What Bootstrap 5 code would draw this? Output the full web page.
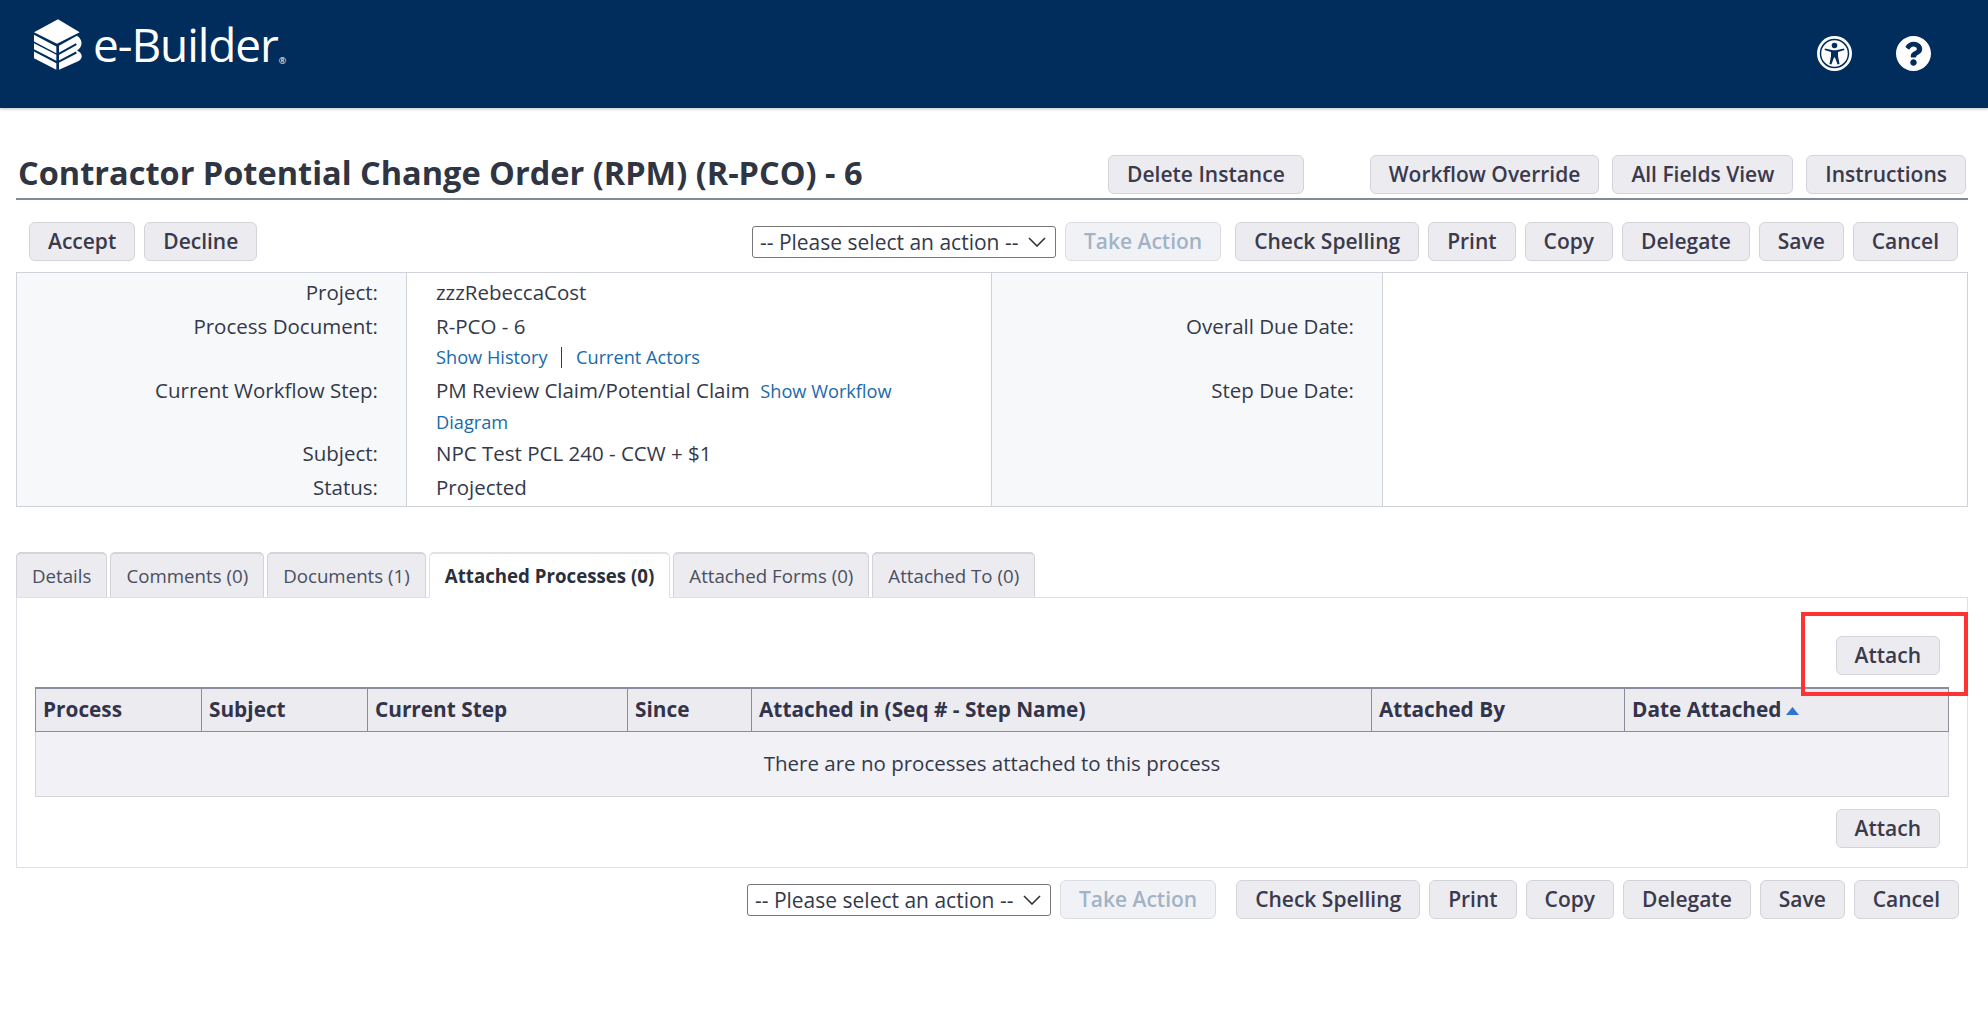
<!DOCTYPE html>
<html lang="en">
<head>
<meta charset="utf-8">
<title>e-Builder</title>
<link href="https://cdn.jsdelivr.net/npm/bootstrap@5.3.0/dist/css/bootstrap.min.css" rel="stylesheet">
<style>
body{font-family:"Open Sans","Liberation Sans",sans-serif;font-size:20.5px;color:#33394a;background:#fff}
.top-bar{height:108px;background:#002d5c;box-shadow:0 1px 3px rgba(0,0,0,.25);padding:18px 57px 0 33px;color:#fff}
.brand-name{font-size:46px;line-height:52px;letter-spacing:-1.1px;margin-left:10px;font-weight:500}
.brand-reg{font-size:9px;align-self:flex-end;margin:0 0 3px 1px}
.top-icons{gap:44px;margin-top:18px}
.page-wrap{margin:0 20px 0 16px}
.title-row{padding:47px 2px 4px 2px;border-bottom:2px solid #808b99}
.page-title{font-size:32.5px;font-weight:700;color:#2f3542;margin:0 0 3px;line-height:36px}
.act-btn{height:39px;padding:0 18px;font-size:21px;font-weight:600;background:#ebebf0;border:1px solid #d3d3da;border-radius:6px;color:#3a3a4c;line-height:35px;white-space:nowrap}
.act-btn:disabled{background:#f1f2f5;color:#a3b3c7;border-color:#dcdde3;opacity:1}
.gap-nine{gap:9px}
.action-row{margin:22px 10px 11px 13px}
.action-sel{width:304px;height:32px;padding:0 30px 2px 7px;font-size:21px;color:#33394a;border:1px solid #767676;border-radius:3px;background-image:url("data:image/svg+xml,%3csvg xmlns='http://www.w3.org/2000/svg' viewBox='0 0 18 10'%3e%3cpath fill='none' stroke='%23333' stroke-width='1.6' d='M1 1l8 8 8-8'/%3e%3c/svg%3e");background-position:right 9px center;background-size:18px 10px}
.info-tbl{width:100%;table-layout:fixed;border:1px solid #cfd2d9;border-collapse:collapse;margin:0}
.info-tbl td{padding:0;vertical-align:top;line-height:34px;border:0}
.info-tbl tr:first-child td{padding-top:2px}
.info-tbl tr:last-child td{padding-bottom:2px}
.info-key{background:#f7f8fa;text-align:right;padding-right:28px!important;border-right:1px solid #cfd2d9!important}
.info-val{padding-left:29px!important;padding-right:30px!important;border-right:1px solid #cfd2d9!important}
.info-val.last-val{border-right:0!important}
.small-link{font-size:18.2px;line-height:27px;color:#1b6aa9;text-decoration:none}
.link-line{line-height:27px;display:block;padding-bottom:2px}
.info-tbl td.wrap-cell{line-height:29px}
.wrap-lead{line-height:34px}
.pipe-sep{display:inline-block;width:1.5px;height:21px;background:#33394a;margin:0 14px 0 13px;vertical-align:-4px}
.tab-strip{margin-top:45px;border-bottom:0;gap:3px}
.tab-strip .nav-link{height:46px;padding:0 15px;font-size:18.7px;line-height:43px;color:#4a4f5f;background:#ebebf0;border:1px solid #d3d3da;border-top-width:2px;border-bottom:1px solid #d3d3da;border-radius:5px 5px 0 0;margin:0}
.tab-strip .nav-link.active{background:#fff;color:#2b2f3c;font-weight:700;border-bottom-color:#fff;position:relative;z-index:1}
.tab-panel{position:relative;border:1px solid #dcdfe5;margin-top:-1px;padding:38px 18px 20px 18px;height:271px}
.panel-btns{padding-right:9px}
.proc-tbl{width:100%;table-layout:fixed;margin:12px 0;border-collapse:collapse}
.proc-tbl th{height:43px;padding:0 7px;font-size:20.8px;font-weight:700;background:#ebebf0;color:#33334a;border:1px solid #8c8ca1;border-top-width:2px;white-space:nowrap}
.proc-tbl td{height:65px;text-align:center;background:#f1f1f6;border:1px solid #d3d3da;padding:0;vertical-align:middle}
.sort-arrow{margin-left:5px;vertical-align:2px}
.marker-box{position:absolute;top:14px;right:-1px;width:167px;height:84px;border:4px solid #ff3333;pointer-events:none}
.bottom-row{margin:12px 9px 0 0}
.wide-gap{margin-right:5px}
.wider-gap{margin-right:11px}
.head-sep-left{margin-right:66px}
.head-btns{gap:13px}
</style>
</head>
<body>
<header class="top-bar d-flex justify-content-between align-items-start">
  <div class="d-flex align-items-start">
    <svg width="50" height="52" viewBox="100 55 150 155" aria-hidden="true">
      <path fill="#fff" d="M103 97 175 58 240 97 172 132ZM103 105 170 140V160L103 125ZM103 130 170 165V183L103 148ZM103 155 170 190V210L103 175Z"/>
      <path fill="#fff" d="M178 138 232 108C250 120 250 140 232 152 250 160 252 178 232 186L178 210Z"/>
      <path stroke="#002d5c" stroke-width="6" fill="none" d="M176 163 230 133M176 186 230 158"/>
    </svg>
    <span class="brand-name">e-Builder</span><span class="brand-reg">®</span>
  </div>
  <div class="top-icons d-flex">
    <svg width="35" height="35" viewBox="0 0 35 35" aria-hidden="true">
      <circle cx="17.5" cy="17.5" r="17.5" fill="#fff"/>
      <circle cx="17.5" cy="17.5" r="14" fill="none" stroke="#002d5c" stroke-width="1.5"/>
      <circle cx="17.5" cy="9.5" r="2.8" fill="#002d5c"/>
      <path fill="#002d5c" d="M8 12.5 16 14.2H19L27 12.5 27.5 14 21 16V20L22.5 28 20.6 28.5 18 21.5H17L14.4 28.5 12.5 28 14 20V16L7.5 14Z"/>
    </svg>
    <svg width="35" height="35" viewBox="8 8 496 496" aria-hidden="true">
      <path fill="#fff" d="M504 256c0 136.997-111.043 248-248 248S8 392.997 8 256C8 119.083 119.043 8 256 8s248 111.083 248 248zM262.655 90c-54.497 0-89.255 22.957-116.549 63.758-3.536 5.286-2.353 12.415 2.715 16.258l34.699 26.31c5.205 3.947 12.621 3.008 16.665-2.122 17.864-22.658 30.113-35.797 57.303-35.797 20.429 0 45.698 13.148 45.698 32.958 0 14.976-12.363 22.667-32.534 33.976C247.128 238.528 216 254.941 216 296v4c0 6.627 5.373 12 12 12h56c6.627 0 12-5.373 12-12v-1.333c0-28.462 83.186-29.647 83.186-106.667 0-58.002-60.165-102-116.531-102zM256 338c-25.365 0-46 20.635-46 46 0 25.364 20.635 46 46 46s46-20.636 46-46c0-25.365-20.635-46-46-46z"/>
    </svg>
  </div>
</header>
<main class="page-wrap">
  <div class="title-row d-flex align-items-center">
    <h1 class="page-title me-auto">Contractor Potential Change Order (RPM) (R-PCO) - 6</h1>
    <button type="button" class="act-btn head-sep-left">Delete Instance</button>
    <div class="d-flex head-btns">
      <button type="button" class="act-btn">Workflow Override</button>
      <button type="button" class="act-btn">All Fields View</button>
      <button type="button" class="act-btn">Instructions</button>
    </div>
  </div>
  <div class="action-row d-flex align-items-center gap-nine">
    <button type="button" class="act-btn">Accept</button>
    <button type="button" class="act-btn me-auto">Decline</button>
    <select class="form-select action-sel"><option>-- Please select an action --</option></select>
    <button type="button" class="act-btn wide-gap" disabled>Take Action</button>
    <button type="button" class="act-btn">Check Spelling</button>
    <button type="button" class="act-btn">Print</button>
    <button type="button" class="act-btn">Copy</button>
    <button type="button" class="act-btn">Delegate</button>
    <button type="button" class="act-btn">Save</button>
    <button type="button" class="act-btn">Cancel</button>
  </div>
  <table class="info-tbl">
    <colgroup><col style="width:390px"><col style="width:585px"><col style="width:391px"><col></colgroup>
    <tr><td class="info-key">Project:</td><td class="info-val">zzzRebeccaCost</td><td class="info-key"></td><td class="info-val last-val"></td></tr>
    <tr><td class="info-key">Process Document:</td><td class="info-val">R-PCO - 6<span class="link-line"><a class="small-link" href="#">Show History</a><span class="pipe-sep"></span><a class="small-link" href="#">Current Actors</a></span></td><td class="info-key">Overall Due Date:</td><td class="info-val last-val"></td></tr>
    <tr><td class="info-key">Current Workflow Step:</td><td class="info-val wrap-cell"><span class="wrap-lead">PM Review Claim/Potential Claim</span> &nbsp;<a class="small-link" href="#"><span>Show Workflow</span> <span>Diagram</span></a></td><td class="info-key">Step Due Date:</td><td class="info-val last-val"></td></tr>
    <tr><td class="info-key">Subject:</td><td class="info-val">NPC Test PCL 240 - CCW + $1</td><td class="info-key"></td><td class="info-val last-val"></td></tr>
    <tr><td class="info-key">Status:</td><td class="info-val">Projected</td><td class="info-key"></td><td class="info-val last-val"></td></tr>
  </table>
  <ul class="nav nav-tabs tab-strip">
    <li class="nav-item"><a class="nav-link" href="#">Details</a></li>
    <li class="nav-item"><a class="nav-link" href="#">Comments (0)</a></li>
    <li class="nav-item"><a class="nav-link" href="#">Documents (1)</a></li>
    <li class="nav-item"><a class="nav-link active" href="#">Attached Processes (0)</a></li>
    <li class="nav-item"><a class="nav-link" href="#">Attached Forms (0)</a></li>
    <li class="nav-item"><a class="nav-link" href="#">Attached To (0)</a></li>
  </ul>
  <section class="tab-panel">
    <div class="panel-btns d-flex justify-content-end"><button type="button" class="act-btn">Attach</button></div>
    <table class="proc-tbl">
      <colgroup><col style="width:166px"><col style="width:166px"><col style="width:260px"><col style="width:124px"><col style="width:620px"><col style="width:253px"><col></colgroup>
      <thead><tr><th>Process</th><th>Subject</th><th>Current Step</th><th>Since</th><th>Attached in (Seq # - Step Name)</th><th>Attached By</th><th>Date Attached<svg class="sort-arrow" width="13" height="8" viewBox="0 0 13 8" aria-hidden="true"><path fill="#2f74d0" d="M6.5 0 13 8H0Z"/></svg></th></tr></thead>
      <tbody><tr><td colspan="7">There are no processes attached to this process</td></tr></tbody>
    </table>
    <div class="panel-btns d-flex justify-content-end"><button type="button" class="act-btn">Attach</button></div>
    <div class="marker-box"></div>
  </section>
  <div class="bottom-row d-flex justify-content-end align-items-center gap-nine">
    <select class="form-select action-sel"><option>-- Please select an action --</option></select>
    <button type="button" class="act-btn wider-gap" disabled>Take Action</button>
    <button type="button" class="act-btn">Check Spelling</button>
    <button type="button" class="act-btn">Print</button>
    <button type="button" class="act-btn">Copy</button>
    <button type="button" class="act-btn">Delegate</button>
    <button type="button" class="act-btn">Save</button>
    <button type="button" class="act-btn">Cancel</button>
  </div>
</main>
<script src="https://cdn.jsdelivr.net/npm/bootstrap@5.3.0/dist/js/bootstrap.bundle.min.js"></script>
</body>
</html>
